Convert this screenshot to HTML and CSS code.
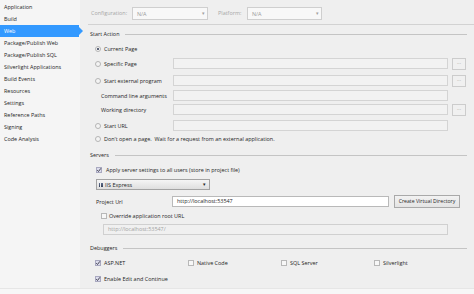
FILE: index.html
```html
<!DOCTYPE html>
<html>
<head>
<meta charset="utf-8">
<link rel="stylesheet" href="styles.css">
</head>
<body>
<div class="app">
  <nav class="sidebar">
    <div class="nav-item">Application</div>
    <div class="nav-item">Build</div>
    <div class="nav-item active">Web</div>
    <div class="nav-item">Package/Publish Web</div>
    <div class="nav-item">Package/Publish SQL</div>
    <div class="nav-item">Silverlight Applications</div>
    <div class="nav-item">Build Events</div>
    <div class="nav-item">Resources</div>
    <div class="nav-item">Settings</div>
    <div class="nav-item">Reference Paths</div>
    <div class="nav-item">Signing</div>
    <div class="nav-item">Code Analysis</div>
  </nav>
  <main class="main">
    <div class="toolbar">
      <span class="tb-label tb-config">Configuration:</span>
      <div class="combo combo-disabled combo-config"><span class="combo-text">N/A</span><span class="arrow">▾</span></div>
      <span class="tb-label tb-platform">Platform:</span>
      <div class="combo combo-disabled combo-platform"><span class="combo-text">N/A</span><span class="arrow">▾</span></div>
    </div>
    <div class="content">
      <div class="group-title t-start">Start Action<span class="rule"></span></div>

      <div class="opt r-current"><span class="radio checked"></span>Current Page</div>

      <div class="field-row fr-specific">
        <div class="opt"><span class="radio"></span>Specific Page</div>
        <div class="textbox"></div>
        <div class="browse">...</div>
      </div>
      <div class="field-row fr-ext">
        <div class="opt"><span class="radio"></span>Start external program</div>
        <div class="textbox"></div>
        <div class="browse">...</div>
      </div>
      <div class="field-row fr-cmd">
        <div class="sublabel">Command line arguments</div>
        <div class="textbox"></div>
        <div></div>
      </div>
      <div class="field-row fr-work">
        <div class="sublabel">Working directory</div>
        <div class="textbox"></div>
        <div class="browse">...</div>
      </div>
      <div class="field-row fr-url">
        <div class="opt"><span class="radio"></span>Start URL</div>
        <div class="textbox"></div>
        <div></div>
      </div>
      <div class="opt r-none"><span class="radio"></span>Don't open a page.&nbsp; Wait for a request from an external application.</div>

      <div class="group-title t-servers">Servers<span class="rule"></span></div>
      <div class="opt chk-apply"><span class="check checked"><svg viewBox="0 0 6 6" width="6" height="6"><path d="M1.2 3.1 L2.5 4.5 L4.9 1.3" fill="none" stroke="#3a3a4a" stroke-width="0.9"/></svg></span>Apply server settings to all users (store in project file)</div>
      <div class="combo combo-iis"><span class="iis-icon"></span><span class="combo-text">IIS Express</span><span class="arrow dark">▾</span></div>
      <div class="url-row">
        <span class="url-label">Project Url</span>
        <div class="textbox white url-box">http://localhost:53547</div>
        <div class="button">Create Virtual Directory</div>
      </div>
      <div class="opt chk-override"><span class="check"></span>Override application root URL</div>
      <div class="textbox disabled-url">http://localhost:53547/</div>

      <div class="group-title t-debug">Debuggers<span class="rule"></span></div>
      <div class="debug-grid">
        <div class="opt"><span class="check checked"><svg viewBox="0 0 6 6" width="6" height="6"><path d="M1.2 3.1 L2.5 4.5 L4.9 1.3" fill="none" stroke="#3a3a4a" stroke-width="0.9"/></svg></span>ASP.NET</div>
        <div class="opt"><span class="check"></span>Native Code</div>
        <div class="opt"><span class="check"></span>SQL Server</div>
        <div class="opt"><span class="check"></span>Silverlight</div>
      </div>
      <div class="opt chk-edit"><span class="check checked"><svg viewBox="0 0 6 6" width="6" height="6"><path d="M1.2 3.1 L2.5 4.5 L4.9 1.3" fill="none" stroke="#3a3a4a" stroke-width="0.9"/></svg></span>Enable Edit and Continue</div>
    </div>
  </main>
</div>
<div class="footer"></div>
</body>
</html>
```

FILE: styles.css
```css
* { box-sizing: border-box; }
html, body {
  margin: 0;
  padding: 0;
}
body {
  width: 474px;
  height: 294px;
  overflow: hidden;
  background: #efefef;
  font-family: "Open Sans", "Noto Sans", sans-serif;
  font-size: 5.45px;
  color: #1e1e1e;
}
.app {
  display: flex;
  height: 288px;
}
.footer {
  height: 6px;
  background: #f7f7f7;
  border-top: 1px solid #e6e6e6;
}

/* sidebar */
.sidebar {
  width: 80px;
  flex: none;
  background: #f5f5f5;
  padding-top: 1px;
  position: relative;
}
.nav-item {
  height: 12px;
  line-height: 12px;
  padding-left: 4px;
  white-space: nowrap;
  position: relative;
}
.nav-item.active {
  background: #3399ff;
  color: #ffffff;
  width: 79px;
}
.nav-item.active::after {
  content: "";
  position: absolute;
  right: -4px;
  top: 2px;
  border-left: 4px solid #3399ff;
  border-top: 4px solid transparent;
  border-bottom: 4px solid transparent;
}

/* main */
.main {
  flex: 1;
  display: flex;
  flex-direction: column;
}
.toolbar {
  height: 25px;
  margin-left: 8px;
  border-bottom: 1px solid #d2d2d2;
  display: flex;
  align-items: flex-start;
  padding-top: 7px;
  padding-left: 3px;
}
.tb-label {
  color: #a6a6a6;
  line-height: 13px;
}
.tb-config { width: 41px; }
.tb-platform { width: 29px; margin-left: 10px; }
.combo {
  height: 13px;
  border: 1px solid #cfcfcf;
  background: #f8f8f8;
  display: flex;
  align-items: center;
  padding-left: 4px;
  padding-right: 2px;
}
.combo-disabled { color: #9a9a9a; }
.combo-config { width: 76px; }
.combo-platform { width: 75px; }
.combo-text { flex: 1; }
.arrow {
  font-size: 5px;
  color: #a0a0a0;
  line-height: 1;
}
.arrow.dark { color: #222; }

.content {
  padding-left: 10px;
  display: flex;
  flex-direction: column;
}
.group-title {
  height: 10px;
  line-height: 10px;
  display: flex;
  align-items: center;
  white-space: nowrap;
  margin-right: 7px;
}
.group-title .rule {
  flex: 1;
  height: 1px;
  background: #c4c4c4;
  margin-left: 6px;
}
.t-start { margin-top: 4px; }
.t-servers { margin-top: 6px; }
.t-debug { margin-top: 8px; }

.opt {
  display: flex;
  align-items: center;
  height: 10px;
  white-space: nowrap;
}
.r-current { margin-left: 5px; margin-top: 5px; }
.r-none { margin-left: 5px; margin-top: 3px; }

.radio {
  width: 6px;
  height: 6px;
  border-radius: 50%;
  border: 1px solid #b4b4b4;
  background: #f4f4f4;
  margin-right: 3px;
  flex: none;
  position: relative;
}
.radio.checked::after {
  content: "";
  position: absolute;
  left: 1px;
  top: 1px;
  width: 2px;
  height: 2px;
  border-radius: 50%;
  background: #2a3550;
}
.check {
  width: 6px;
  height: 6px;
  border: 1px solid #b8b8b8;
  background: #f7f7f7;
  margin-right: 3px;
  flex: none;
  display: flex;
  align-items: center;
  justify-content: center;
}
.check svg { display: block; flex: none; }
.check.checked { background: #dcdcec; border-color: #a9a9c0; }

.field-row {
  display: grid;
  grid-template-columns: 78px 1fr 18px;
  margin-left: 5px;
  margin-right: 8px;
  height: 11px;
  align-items: center;
}
.fr-specific { margin-top: 3px; }
.fr-ext { margin-top: 6px; }
.fr-cmd { margin-top: 5px; }
.fr-work { margin-top: 2px; }
.fr-url { margin-top: 6px; }
.sublabel { padding-left: 6px; white-space: nowrap; }

.textbox {
  height: 11px;
  border: 1px solid #d4d4d4;
  background: #f2f2f2;
  line-height: 9px;
  padding-left: 4px;
  white-space: nowrap;
}
.textbox.white { background: #ffffff; border-color: #b9b9b9; }
.browse {
  height: 12px;
  margin-left: 4px;
  border: 1px solid #cccccc;
  background: #f0f0f0;
  color: #9d9d9d;
  text-align: center;
  line-height: 7px;
  font-size: 5px;
  align-self: start;
  margin-top: 1px;
}

.chk-apply { margin-left: 6px; margin-top: 5px; }
.chk-apply .check { margin-right: 4px; }
.combo-iis {
  margin-left: 6px;
  margin-top: 4px;
  width: 114px;
  height: 11px;
  border-color: #a3a3a3;
  background: linear-gradient(#f5f5f5, #dedede);
  padding-left: 2px;
  padding-right: 3px;
}
.iis-icon {
  width: 4px;
  height: 4px;
  margin-right: 2px;
  background:
    linear-gradient(90deg, transparent 1.5px, #f0f0f0 1.5px, #f0f0f0 2.5px, transparent 2.5px),
    linear-gradient(#5f6f8f, #39435a);
  flex: none;
}

.url-row {
  display: flex;
  align-items: center;
  margin-left: 6px;
  margin-top: 5px;
  height: 13px;
}
.url-label { width: 76px; flex: none; }
.url-box { width: 217px; line-height: 9px; }
.button {
  margin-left: 5px;
  width: 66px;
  height: 13px;
  border: 1px solid #a9a9a9;
  background: linear-gradient(#f2f2f2, #e4e4e4);
  text-align: center;
  line-height: 11px;
  font-size: 5.2px;
  white-space: nowrap;
}

.chk-override { margin-left: 11px; margin-top: 3px; }
.chk-override .check { margin-right: 2px; }
.disabled-url {
  margin-left: 13px;
  margin-top: 3px;
  width: 345px;
  color: #a2a2a2;
  background: #f0f0f0;
  border-color: #d0d0d0;
}

.debug-grid {
  display: grid;
  grid-template-columns: repeat(4, 93px);
  margin-left: 5px;
  margin-top: 5px;
}
.chk-edit { margin-left: 5px; margin-top: 6px; }
```
